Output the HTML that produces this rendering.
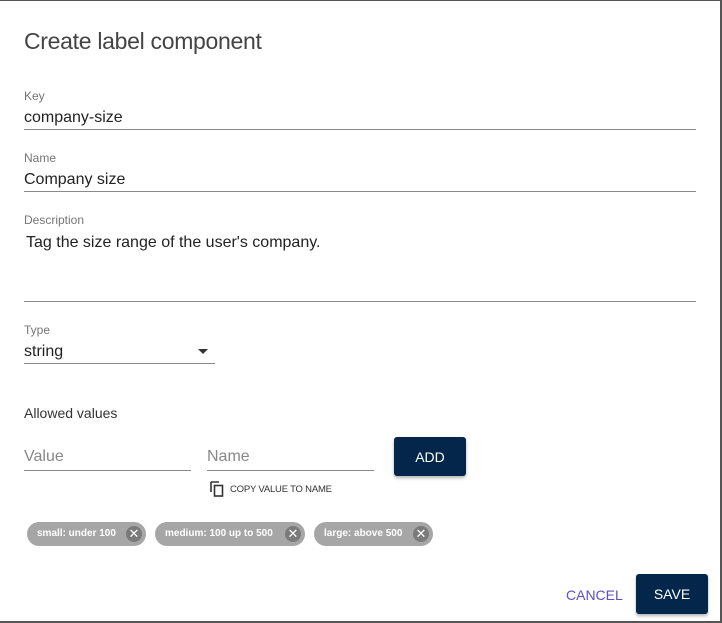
<!DOCTYPE html>
<html><head><meta charset="utf-8"><style>
body{margin:0;width:722px;height:623px;background:#fff;font-family:"Liberation Sans",sans-serif;position:relative;overflow:hidden}
.a{position:absolute;white-space:nowrap}
.lbl{font-size:12px;color:#757575}
.val{font-size:16px;color:#222}
.line{position:absolute;height:1px;background:#8a8a8a}
.chip{position:absolute;top:522px;height:24px;border-radius:12px;background:#a6a6a6;color:#fff;font-size:10px;font-weight:bold;line-height:24px;padding-left:10px;box-sizing:border-box}
.chip i{position:absolute;right:4px;top:4px;width:16px;height:16px;border-radius:50%;background:#7a7a7a;color:#fff;font-style:normal;font-size:13px;line-height:16px;text-align:center;font-weight:normal}
.btn{position:absolute;background:#03264a;color:#fff;border-radius:3px;font-size:14px;text-align:center;box-shadow:0 2px 3px rgba(0,0,0,.3)}
</style></head><body>
<div class="a" style="left:0;top:0;width:722px;height:1px;background:#555"></div>
<div class="a" style="left:720px;top:0;width:2px;height:623px;background:#555"></div>
<div class="a" style="left:0;top:621px;width:722px;height:2px;background:#555"></div>
<div class="a" style="left:24px;top:28px;font-size:23px;color:#444;letter-spacing:-0.3px">Create label component</div>
<div class="a lbl" style="left:24px;top:89px">Key</div>
<div class="a val" style="left:24px;top:109px">company-size</div>
<div class="line" style="left:24px;top:129px;width:672px"></div>
<div class="a lbl" style="left:24px;top:151px">Name</div>
<div class="a val" style="left:24px;top:171px">Company size</div>
<div class="line" style="left:24px;top:191px;width:672px"></div>
<div class="a lbl" style="left:24px;top:213px">Description</div>
<div class="a val" style="left:26px;top:234px">Tag the size range of the user's company.</div>
<div class="line" style="left:24px;top:301px;width:672px"></div>
<div class="a lbl" style="left:24px;top:323px">Type</div>
<div class="a val" style="left:24px;top:343px">string</div>
<div class="a" style="left:198px;top:349px;width:0;height:0;border-left:5px solid transparent;border-right:5px solid transparent;border-top:5px solid #333"></div>
<div class="line" style="left:24px;top:363px;width:191px"></div>
<div class="a" style="left:24px;top:405px;font-size:14px;color:#333">Allowed values</div>
<div class="a" style="left:24px;top:448px;font-size:16px;color:#888">Value</div>
<div class="line" style="left:24px;top:470px;width:167px"></div>
<div class="a" style="left:207px;top:448px;font-size:16px;color:#888">Name</div>
<div class="line" style="left:207px;top:470px;width:167px"></div>
<div class="btn" style="left:394px;top:437px;width:72px;height:39px;line-height:40px">ADD</div>
<svg class="a" style="left:210px;top:481px" width="14" height="16" viewBox="0 0 14 16"><path d="M1 1h8M1 1v10" stroke="#333" stroke-width="1.6" fill="none"/><rect x="4.5" y="4.5" width="8" height="10.5" stroke="#333" stroke-width="1.6" fill="none"/></svg>
<div class="a" style="left:230px;top:484px;font-size:9.5px;color:#333;letter-spacing:-0.2px">COPY VALUE TO NAME</div>
<div class="chip" style="left:27px;width:119px">small: under 100<i>✕</i></div>
<div class="chip" style="left:155px;width:150px">medium: 100 up to 500<i>✕</i></div>
<div class="chip" style="left:314px;width:119px">large: above 500<i>✕</i></div>
<div class="a" style="left:566px;top:587px;font-size:14px;color:#5a4fc8">CANCEL</div>
<div class="btn" style="left:636px;top:574px;width:72px;height:40px;line-height:40px">SAVE</div>
</body></html>
